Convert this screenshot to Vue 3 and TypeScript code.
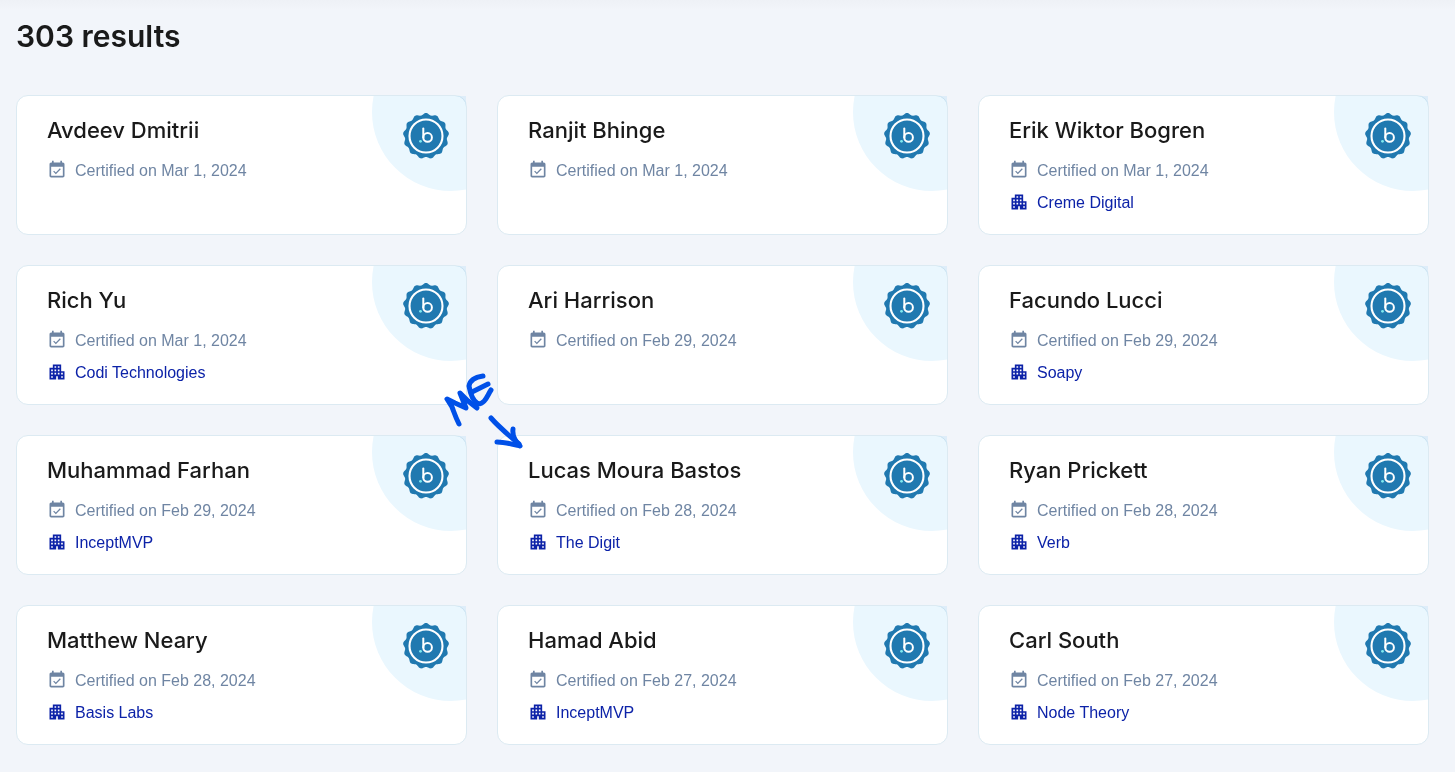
<script setup lang="ts">
interface Person {
  name: string
  date: string
  company?: string
  marked?: boolean
}

const people: Person[] = [
  { name: 'Avdeev Dmitrii', date: 'Mar 1, 2024' },
  { name: 'Ranjit Bhinge', date: 'Mar 1, 2024' },
  { name: 'Erik Wiktor Bogren', date: 'Mar 1, 2024', company: 'Creme Digital' },
  { name: 'Rich Yu', date: 'Mar 1, 2024', company: 'Codi Technologies' },
  { name: 'Ari Harrison', date: 'Feb 29, 2024' },
  { name: 'Facundo Lucci', date: 'Feb 29, 2024', company: 'Soapy' },
  { name: 'Muhammad Farhan', date: 'Feb 29, 2024', company: 'InceptMVP' },
  { name: 'Lucas Moura Bastos', date: 'Feb 28, 2024', company: 'The Digit', marked: true },
  { name: 'Ryan Prickett', date: 'Feb 28, 2024', company: 'Verb' },
  { name: 'Matthew Neary', date: 'Feb 28, 2024', company: 'Basis Labs' },
  { name: 'Hamad Abid', date: 'Feb 27, 2024', company: 'InceptMVP' },
  { name: 'Carl South', date: 'Feb 27, 2024', company: 'Node Theory' },
]

// Outline of the seal: thirteen rounded lobes around the centre.
function sealPath(lobes: number, radius: number, depth: number): string {
  const points: string[] = []
  const steps = lobes * 16
  for (let i = 0; i < steps; i++) {
    const a = (i / steps) * Math.PI * 2
    const r = radius + depth * Math.cos(a * lobes)
    points.push(`${(24 + r * Math.sin(a)).toFixed(2)} ${(24 - r * Math.cos(a)).toFixed(2)}`)
  }
  return `M${points.join('L')}Z`
}

const seal = sealPath(13, 22, 1)
</script>

<template>
  <main class="page">
    <h1 class="title">303 results</h1>
    <ul class="grid">
      <li v-for="person in people" :key="person.name" class="card">
        <div class="corner"><div class="disc"></div></div>
        <svg class="badge" viewBox="0 0 48 48" aria-hidden="true">
          <path :d="seal" fill="#2079b0" />
          <circle cx="24" cy="24" r="16.5" fill="none" stroke="#fff" stroke-width="2.1" />
          <path d="M21.3 16.6V25.500" fill="none" stroke="#fff" stroke-width="2" stroke-linecap="round" />
          <circle cx="25.6" cy="25.4" r="4.3" fill="none" stroke="#fff" stroke-width="2" />
          <circle cx="18.5" cy="29.3" r="1.4" fill="#7eeaf0" />
        </svg>
        <h2 class="name">{{ person.name }}</h2>
        <p class="row date">
          <svg class="icon" viewBox="0 0 24 24" aria-hidden="true">
            <path fill="currentColor" d="M16.53 11.06 15.47 10l-4.88 4.88-2.12-2.12-1.06 1.06L10.59 17l5.94-5.94zM19 3h-1V1h-2v2H8V1H6v2H5c-1.11 0-1.99.9-1.99 2L3 19c0 1.1.89 2 2 2h14c1.1 0 2-.9 2-2V5c0-1.1-.9-2-2-2zm0 16H5V8h14v11z" />
          </svg>
          <span>Certified on {{ person.date }}</span>
        </p>
        <a v-if="person.company" class="row company" href="#">
          <svg class="icon" viewBox="0 0 24 24" aria-hidden="true">
            <path fill="currentColor" d="M17 11V3H7v4H3v14h8v-4h2v4h8V11h-4zM7 19H5v-2h2v2zm0-4H5v-2h2v2zm0-4H5V9h2v2zm4 4H9v-2h2v2zm0-4H9V9h2v2zm0-4H9V5h2v2zm4 8h-2v-2h2v2zm0-4h-2V9h2v2zm0-4h-2V5h2v2zm4 12h-2v-2h2v2zm0-4h-2v-2h2v2z" />
          </svg>
          <span>{{ person.company }}</span>
        </a>
        <svg v-if="person.marked" class="note" viewBox="0 0 110 100" role="img" aria-label="Handwritten note with an arrow">
          <g fill="none" stroke="#0050e8" stroke-width="5" stroke-linecap="round" stroke-linejoin="round">
            <path d="M29 64C25 56 24 52 22 47L17 39 25 43 36 48 30 33 38 41 47 48" />
            <path d="M53 16C46 17 40 20 39 26C40 32 43 41 48 44C55 44 57 36 61 30" />
            <path d="M42 32 58 24" />
            <path d="M61 58C67 65 76 73 89 84" />
            <path d="M83 69C82 76 85 81 90 86C82 84 75 82 67 82" />
          </g>
        </svg>
      </li>
    </ul>
  </main>
</template>

<style>
body {
  margin: 0;
  background: #f2f5fa;
}
</style>

<style scoped>
.page {
  box-sizing: border-box;
  min-height: 100vh;
  padding: 16px 26px 26px 16px;
  background: linear-gradient(#eef1f6, #f2f5fa 10px);
  font-family: Inter, "Liberation Sans", sans-serif;
  color: #1a1a1a;
}
.title {
  margin: 0 0 39px;
  font-size: 30px;
  line-height: 40px;
  font-weight: 600;
}
.grid {
  display: grid;
  grid-template-columns: repeat(3, minmax(0, 1fr));
  grid-auto-rows: minmax(140px, auto);
  gap: 30px;
  margin: 0;
  padding: 0;
  list-style: none;
}
.card {
  position: relative;
  box-sizing: border-box;
  padding: 18px 30px 11px;
  border: 1px solid #dceaf2;
  border-radius: 12px;
  background: #fff;
}
.corner {
  position: absolute;
  top: 0;
  right: 0;
  width: 94px;
  height: 95px;
  overflow: hidden;
  mix-blend-mode: multiply;
}
.disc {
  width: 158px;
  height: 158px;
  margin-top: -63px;
  border-radius: 50%;
  background: #eaf7fe;
}
.badge {
  position: absolute;
  top: 16px;
  right: 16px;
  width: 48px;
  height: 48px;
}
.name {
  position: relative;
  margin: 0 0 13px;
  font-size: 22px;
  line-height: 32px;
  font-weight: 500;
}
.row {
  display: flex;
  align-items: center;
  gap: 8px;
  width: fit-content;
  margin: 0 0 8px;
  font-family: "Liberation Sans", Arial, sans-serif;
  font-size: 16px;
  line-height: 24px;
  text-decoration: none;
}
.icon {
  width: 20px;
  height: 20px;
  margin-bottom: 2px;
}
.date {
  color: #6f85a3;
}
.company {
  color: #0c22a8;
}
.note {
  position: absolute;
  top: -76px;
  left: -68px;
  width: 110px;
  height: 100px;
  pointer-events: none;
}
</style>
